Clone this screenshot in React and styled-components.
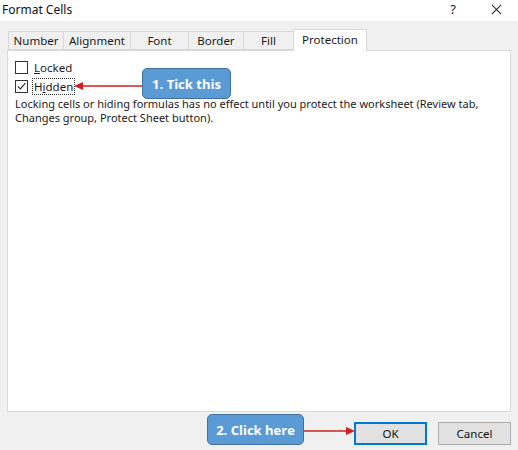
import styled, { createGlobalStyle } from "styled-components";

const GlobalStyle = createGlobalStyle`
  html, body {
    margin: 0;
    padding: 0;
    background: #f0f0f0;
  }
`;

const tabs = [
  { label: "Number", width: 56 },
  { label: "Alignment", width: 68 },
  { label: "Font", width: 59 },
  { label: "Border", width: 56 },
  { label: "Fill", width: 51 },
  { label: "Protection", width: 74, active: true },
];

const App = () => {
  return (
    <Dialog>
      <GlobalStyle />
      <TitleBar>
        <Title>Format Cells</Title>
        <TitleButtons>
          <HelpMark>?</HelpMark>
          <CloseIcon viewBox="0 0 12 12">
            <path d="M1 1 L11 11 M11 1 L1 11" />
          </CloseIcon>
        </TitleButtons>
      </TitleBar>

      <Body>
        <TabStrip>
          {tabs.map((t) => (
            <Tab key={t.label} $width={t.width} $active={t.active}>
              {t.label}
            </Tab>
          ))}
        </TabStrip>

        <Panel>
          <CheckRow>
            <Box />
            <CheckLabel>
              <u>L</u>ocked
            </CheckLabel>
          </CheckRow>
          <CheckRow>
            <Box>
              <svg viewBox="0 0 12 12" width="12" height="12">
                <path d="M2 6.5 L4.8 9.2 L10.2 2.8" fill="none" stroke="#222" strokeWidth="1.1" />
              </svg>
            </Box>
            <CheckLabel $focused>
              H<u>i</u>dden
            </CheckLabel>
          </CheckRow>
          <Note>
            Locking cells or hiding formulas has no effect until you protect the worksheet (Review tab,
            <br />
            Changes group, Protect Sheet button).
          </Note>
        </Panel>

        <Footer>
          <Button $primary>OK</Button>
          <Button>Cancel</Button>
        </Footer>
      </Body>

      {/* annotations */}
      <Arrow $left={74} $top={80} width="70" height="12" viewBox="0 0 70 12">
        <line x1="8" y1="6" x2="70" y2="6" stroke="#d21f1f" strokeWidth="1.6" />
        <polygon points="0,6 9,2 9,10" fill="#d21f1f" />
      </Arrow>
      <Callout $left={142} $top={68} $width={89}>1. Tick this</Callout>

      <Arrow $left={303} $top={425} width="52" height="12" viewBox="0 0 52 12">
        <line x1="0" y1="6" x2="44" y2="6" stroke="#d21f1f" strokeWidth="1.6" />
        <polygon points="52,6 43,2 43,10" fill="#d21f1f" />
      </Arrow>
      <Callout $left={207} $top={414} $width={97}>2. Click here</Callout>
    </Dialog>
  );
};

export default App;

const Dialog = styled.div`
  position: relative;
  width: 518px;
  height: 450px;
  display: flex;
  flex-direction: column;
  background: #f0f0f0;
  font-family: "Noto Sans", "Open Sans", sans-serif;
  font-size: 11.5px;
  color: #1a1a1a;
  overflow: hidden;
`;

const TitleBar = styled.div`
  height: 21px;
  background: #ffffff;
  display: flex;
  align-items: center;
  justify-content: space-between;
  padding: 0 16px 0 2px;
`;

const Title = styled.span`
  font-size: 12px;
  color: #111;
  margin-top: -3px;
`;

const TitleButtons = styled.div`
  display: flex;
  align-items: center;
  gap: 35px;
  margin-top: -3px;
`;

const HelpMark = styled.span`
  font-size: 13px;
  color: #222;
`;

const CloseIcon = styled.svg`
  width: 11px;
  height: 11px;
  stroke: #222;
  stroke-width: 1.1;
`;

const Body = styled.div`
  flex: 1;
  display: flex;
  flex-direction: column;
  padding: 8px 7px 0 7px;
`;

const TabStrip = styled.div`
  display: flex;
  align-items: flex-end;
  height: 21px;
  padding-left: 2px;
  position: relative;
  z-index: 1;
`;

const Tab = styled.div`
  width: ${(p) => p.$width}px;
  box-sizing: border-box;
  height: ${(p) => (p.$active ? 22 : 19)}px;
  margin-bottom: ${(p) => (p.$active ? -1 : 0)}px;
  margin-left: -1px;
  display: flex;
  align-items: center;
  justify-content: center;
  padding-bottom: ${(p) => (p.$active ? 3 : 0)}px;
  background: ${(p) => (p.$active ? "#ffffff" : "#f0f0f0")};
  border: 1px solid #d9d9d9;
  border-bottom: ${(p) => (p.$active ? "none" : "1px solid #d9d9d9")};
  color: #1a1a1a;
  font-size: 11.5px;
`;

const Panel = styled.div`
  height: 362px;
  box-sizing: border-box;
  background: #ffffff;
  border: 1px solid #d9d9d9;
  padding: 7px 0 0 7px;
  display: flex;
  flex-direction: column;
`;

const CheckRow = styled.div`
  display: flex;
  align-items: center;
  gap: 4px;
  height: 18px;
  margin-bottom: 1px;
`;

const Box = styled.span`
  width: 13px;
  height: 13px;
  box-sizing: border-box;
  border: 1px solid #333;
  background: #fff;
  display: flex;
  align-items: center;
  justify-content: center;
`;

const CheckLabel = styled.span`
  padding: 0 1px;
  line-height: 15px;
  border: 1px ${(p) => (p.$focused ? "dotted #333" : "solid transparent")};
  color: #1a1a1a;
`;

const Note = styled.p`
  margin: 1px 0 0 0;
  line-height: 13.5px;
  font-size: 11px;
  color: #1a1a1a;
`;

const Footer = styled.div`
  display: flex;
  justify-content: flex-end;
  gap: 11px;
  padding-top: 10px;
`;

const Button = styled.button`
  width: 73px;
  height: 23px;
  box-sizing: border-box;
  background: #e1e1e1;
  border: ${(p) => (p.$primary ? "2px solid #0078d7" : "1px solid #adadad")};
  font-family: "Noto Sans", "Open Sans", sans-serif;
  font-size: 11.5px;
  color: #111;
  padding: 0;
`;

const Callout = styled.div`
  position: absolute;
  left: ${(p) => p.$left}px;
  top: ${(p) => p.$top}px;
  width: ${(p) => p.$width}px;
  height: 31px;
  box-sizing: border-box;
  background: #5b9bd5;
  border: 1px solid #41719c;
  border-radius: 5px;
  display: flex;
  align-items: center;
  justify-content: center;
  color: #ffffff;
  font-weight: 700;
  font-size: 13px;
  font-family: "Open Sans", "Noto Sans", sans-serif;
`;

const Arrow = styled.svg`
  position: absolute;
  left: ${(p) => p.$left}px;
  top: ${(p) => p.$top}px;
`;
